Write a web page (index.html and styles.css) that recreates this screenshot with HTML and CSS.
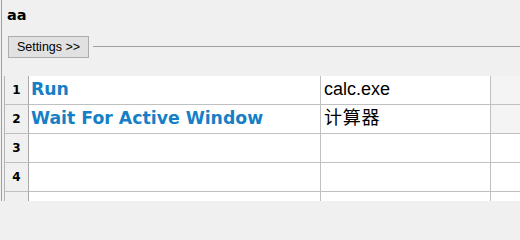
FILE: index.html
```html
<!DOCTYPE html>
<html>
<head>
<meta charset="utf-8">
<link rel="stylesheet" href="styles.css">
</head>
<body>
<div class="app">
  <div class="title">aa</div>
  <div class="toolbar">
    <button class="btn">Settings &gt;&gt;</button>
    <div class="rule"></div>
  </div>
  <div class="grid">
    <div class="cell hdr">1</div>
    <div class="cell cmd">Run</div>
    <div class="cell val">calc.exe</div>
    <div class="cell ext"></div>

    <div class="cell hdr">2</div>
    <div class="cell cmd">Wait For Active Window</div>
    <div class="cell val cjk">计算器</div>
    <div class="cell ext"></div>

    <div class="cell hdr">3</div>
    <div class="cell"></div>
    <div class="cell"></div>
    <div class="cell"></div>

    <div class="cell hdr">4</div>
    <div class="cell"></div>
    <div class="cell"></div>
    <div class="cell"></div>

    <div class="cell hdr"></div>
    <div class="cell"></div>
    <div class="cell"></div>
    <div class="cell"></div>
  </div>
</div>
</body>
</html>
```
FILE: styles.css
```css
html, body {
  margin: 0;
  padding: 0;
  background: #f0f0f0;
  overflow: hidden;
}
.app {
  margin-left: 1px;
  border-left: 1px solid #a0a0a0;
  height: 201px;
  overflow: hidden;
}
.title {
  padding: 7px 0 0 5px;
  height: 17px;
  line-height: 17px;
  font-family: "DejaVu Sans", sans-serif;
  font-weight: bold;
  font-size: 14.5px;
  color: #000;
}
.toolbar {
  display: flex;
  align-items: center;
  margin: 12px 0 0 6px;
  height: 22px;
}
.btn {
  box-sizing: border-box;
  width: 81px;
  height: 22px;
  margin: 0;
  padding: 0;
  border: 1px solid #adadad;
  background: #e1e1e1;
  font-family: "Liberation Sans", sans-serif;
  font-size: 12.5px;
  color: #000;
  line-height: 20px;
}
.rule {
  flex: 1;
  height: 1px;
  margin-left: 4px;
  margin-top: -1px;
  background: #a0a0a0;
}
.grid {
  display: grid;
  grid-template-columns: 24px 292px 170px 60px;
  grid-auto-rows: 29px;
  margin: 18px 0 0 2px;
  border-left: 1px solid #b4b4b4;
}
.cell {
  box-sizing: border-box;
  border-right: 1px solid #c0c0c0;
  border-bottom: 1px solid #c0c0c0;
  background: #fff;
  white-space: nowrap;
  overflow: hidden;
  line-height: 26px;
}
.hdr {
  background: #f0f0f0;
  border-right-color: #a8a8a8;
  text-align: center;
  font-family: "DejaVu Sans", sans-serif;
  font-weight: bold;
  font-size: 12px;
  line-height: 28px;
  color: #000;
}
.cmd {
  padding-left: 2px;
  font-family: "DejaVu Sans", sans-serif;
  font-weight: bold;
  font-size: 17.3px;
  color: #167fc6;
}
.val {
  padding-left: 3px;
  font-family: "Liberation Sans", "Noto Sans CJK SC", sans-serif;
  font-size: 18px;
  color: #000;
}
.cjk {
  letter-spacing: 0.7px;
}
.ext {
  background: #f4f4f4;
}
```
